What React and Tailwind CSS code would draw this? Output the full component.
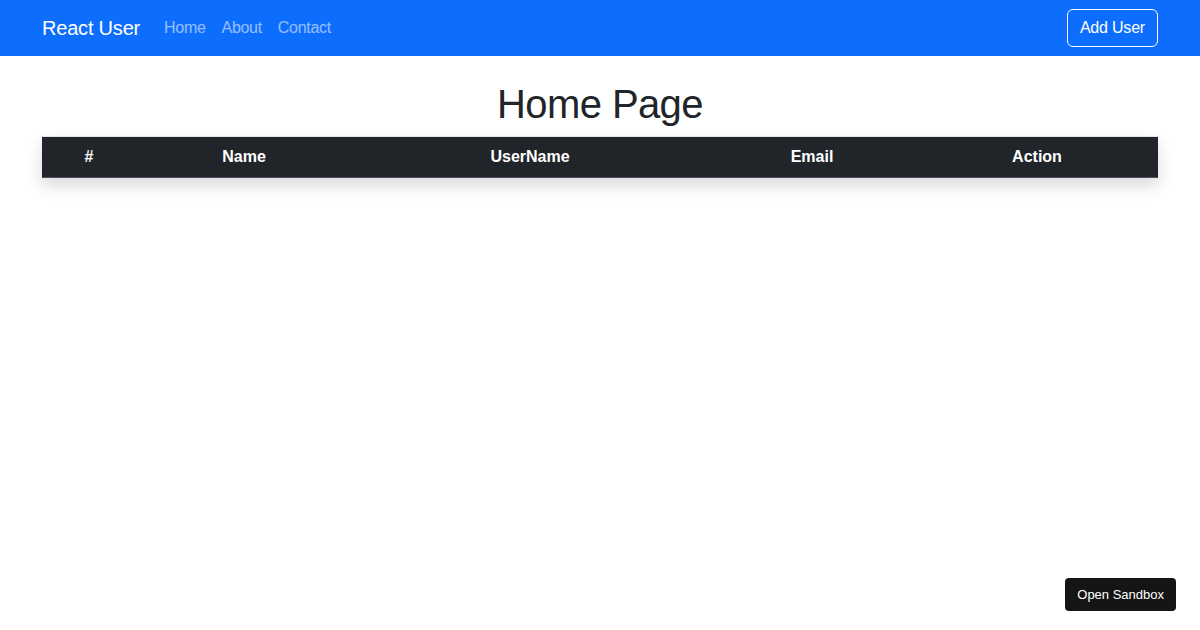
import React from 'react';

const cols = ['#', 'Name', 'UserName', 'Email', 'Action'];

export default function App() {
  return (
    <div className="min-h-[630px] bg-white text-[#212529] font-['Liberation_Sans',Arial,sans-serif]">
      <nav className="bg-[#0d6efd] h-14">
        <div className="mx-auto w-[1140px] px-3 h-full flex items-center">
          <a className="text-white text-[20px] leading-[30px] tracking-[-0.2px] mr-4">React User</a>
          <ul className="flex items-center text-[16px] tracking-[-0.3px] text-white/55">
            <li className="px-2">Home</li>
            <li className="px-2">About</li>
            <li className="px-2">Contact</li>
          </ul>
          <button className="ml-auto h-[38px] px-3 border border-white rounded-md text-white text-[16px] tracking-[-0.2px]">
            Add User
          </button>
        </div>
      </nav>

      <div className="mx-auto w-[1140px] px-3 py-6">
        <h1 className="text-center text-[40px] leading-[48px] tracking-[-0.6px] mb-2">Home Page</h1>
        <div className="shadow-[0_8px_16px_rgba(0,0,0,0.15)] border-t border-[#dee2e6]">
          <div className="grid grid-cols-[94px_216px_356px_208px_242px] bg-[#212529] text-white font-bold text-[16px] border-b border-[#49505a]">
            {cols.map((c) => (
              <div key={c} className="text-center py-2 leading-6">{c}</div>
            ))}
          </div>
        </div>
      </div>

      <button className="fixed right-6 bottom-[19px] h-[33px] px-3 bg-[#151515] text-white text-[13px] rounded">
        Open Sandbox
      </button>
    </div>
  );
}
